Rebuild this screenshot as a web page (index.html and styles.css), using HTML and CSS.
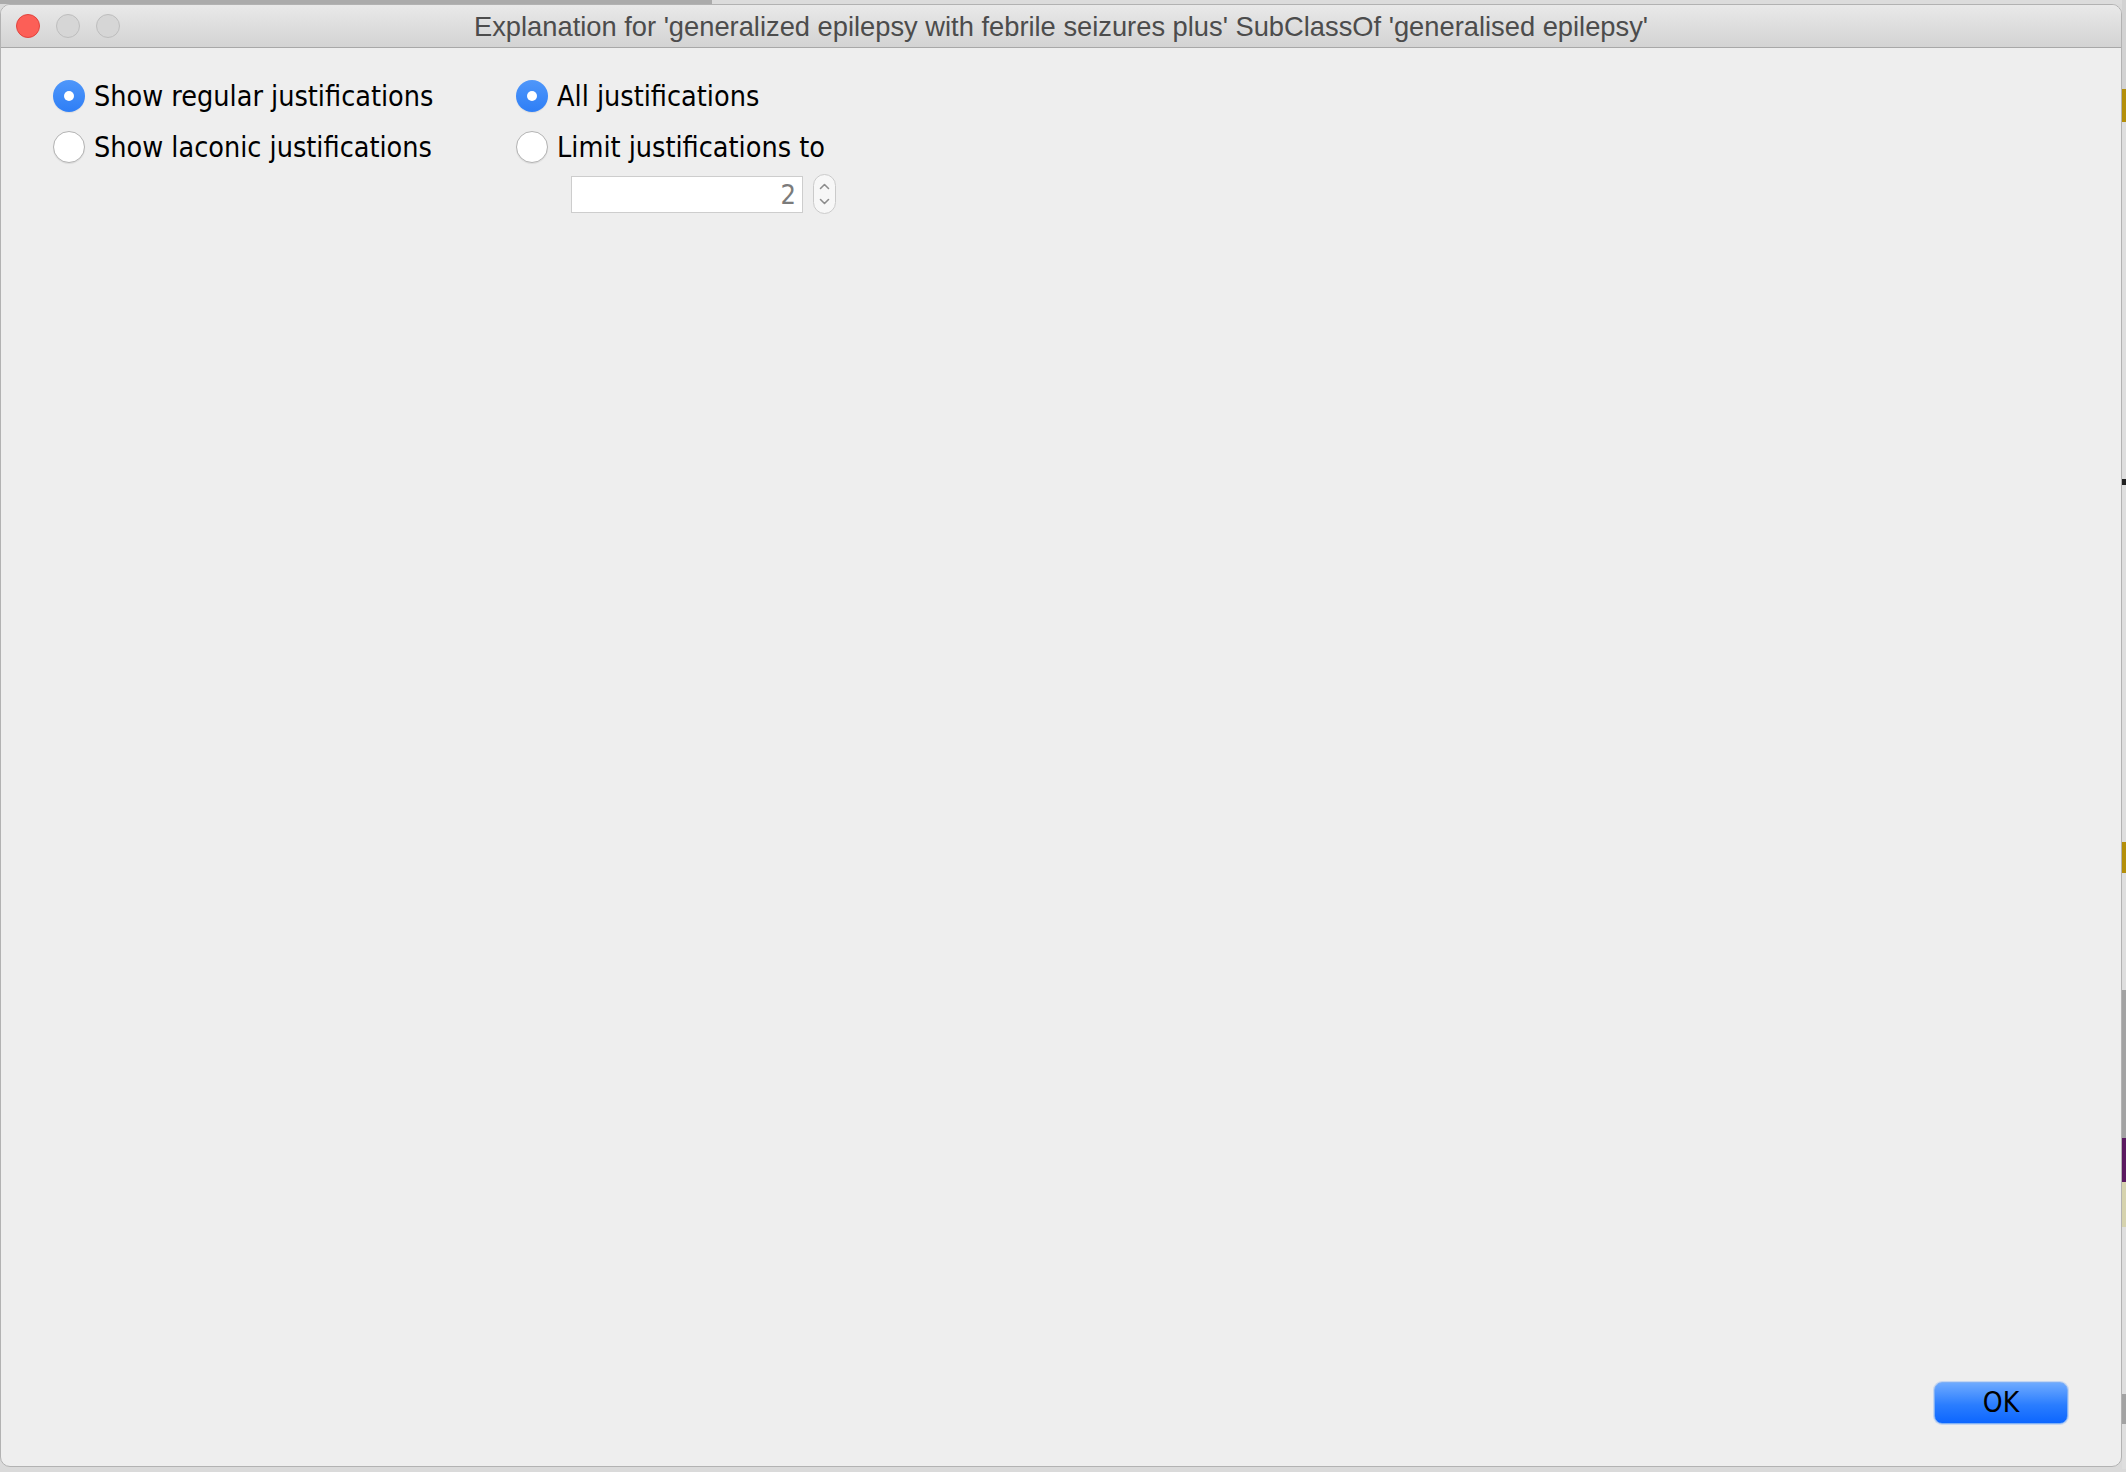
FILE: index.html
```html
<!DOCTYPE html>
<html lang="en">
<head>
<meta charset="utf-8">
<title>Explanation</title>
<link rel="stylesheet" href="styles.css">
</head>
<body>
<div class="desktop">
  <div class="window">
    <div class="titlebar">
      <div class="lights">
        <span class="light close"></span>
        <span class="light"></span>
        <span class="light"></span>
      </div>
      <div class="title">Explanation for 'generalized epilepsy with febrile seizures plus' SubClassOf 'generalised epilepsy'</div>
      <div class="spacer"></div>
    </div>
    <div class="content">
      <div class="options">
        <div class="col">
          <div class="radio"><span class="dot checked"></span><span class="label">Show regular justifications</span></div>
          <div class="radio"><span class="dot"></span><span class="label">Show laconic justifications</span></div>
        </div>
        <div class="col">
          <div class="radio"><span class="dot checked"></span><span class="label">All justifications</span></div>
          <div class="radio"><span class="dot"></span><span class="label">Limit justifications to</span></div>
          <div class="limit">
            <div class="field">2</div>
            <svg class="spinner" width="23" height="40" viewBox="0 0 23 40">
              <rect x="0.5" y="0.5" width="22" height="39" rx="11" ry="11" fill="#f7f7f7" stroke="#cacaca"/>
              <polyline points="7.5,14.5 11.5,10.5 15.5,14.5" fill="none" stroke="#8c8c8c" stroke-width="1.6" stroke-linecap="round" stroke-linejoin="round"/>
              <polyline points="7.5,25.5 11.5,29.5 15.5,25.5" fill="none" stroke="#8c8c8c" stroke-width="1.6" stroke-linecap="round" stroke-linejoin="round"/>
            </svg>
          </div>
        </div>
      </div>
      <div class="footer">
        <button class="ok" type="button">OK</button>
      </div>
    </div>
  </div>
  <div class="edge">
    <span class="band b-gray" style="height:89px"></span>
    <span class="band b-gold" style="height:33px"></span>
    <span class="band b-light" style="height:357px"></span>
    <span class="band b-dark" style="height:6px"></span>
    <span class="band b-light" style="height:357px"></span>
    <span class="band b-gold" style="height:31px"></span>
    <span class="band b-light" style="height:117px"></span>
    <span class="band b-mid" style="height:148px"></span>
    <span class="band b-purple" style="height:44px"></span>
    <span class="band b-beige" style="height:45px"></span>
    <span class="band b-light" style="height:167px"></span>
    <span class="band b-mid" style="height:30px"></span>
    <span class="band b-light" style="height:45px"></span>
  </div>
</div>
</body>
</html>
```
FILE: styles.css
```css
html, body {
  margin: 0;
  padding: 0;
}

body {
  width: 2126px;
  height: 1472px;
  overflow: hidden;
  background: #e0e0e0;
}

.desktop {
  display: flex;
  width: 2126px;
  height: 1472px;
  background:
    linear-gradient(to right, #ababab 0 712px, #dcdcdc 712px) top left / 100% 4px no-repeat,
    #dadada;
}

.window {
  box-sizing: border-box;
  width: 2122px;
  height: 1463px;
  margin-top: 4px;
  border: 1px solid #b2b2b2;
  border-radius: 10px;
  overflow: hidden;
  background: #eeeeee;
  display: flex;
  flex-direction: column;
}

.titlebar {
  box-sizing: border-box;
  height: 43px;
  flex: none;
  border-bottom: 1px solid #a8a8a8;
  background: linear-gradient(to bottom, #e9e9e9, #d3d3d3);
  display: grid;
  grid-template-columns: 1fr auto 1fr;
  align-items: center;
}

.lights {
  display: flex;
  gap: 16px;
  padding-left: 15px;
}

.light {
  box-sizing: border-box;
  width: 24px;
  height: 24px;
  border-radius: 50%;
  background: #d6d6d6;
  border: 1px solid #bdbdbd;
}

.light.close {
  background: #fc5f57;
  border-color: #e0443e;
}

.title {
  font-family: "Liberation Sans", Arial, sans-serif;
  font-size: 27.3px;
  color: #4c4c4c;
  white-space: nowrap;
  padding-top: 2px;
}

.content {
  flex: 1;
  display: flex;
  flex-direction: column;
  padding: 30px 53px 42px 52px;
}

.options {
  display: grid;
  grid-template-columns: 463px auto;
  align-items: start;
}

.col {
  display: flex;
  flex-direction: column;
  gap: 15px;
}

.radio {
  height: 36px;
  display: flex;
  align-items: center;
  gap: 9px;
  font-family: "DejaVu Sans Condensed", "DejaVu Sans", sans-serif;
  font-stretch: condensed;
  font-size: 28.5px;
  color: #000;
}

.label {
  white-space: nowrap;
}

.dot {
  box-sizing: border-box;
  flex: none;
  width: 32px;
  height: 32px;
  border-radius: 50%;
  background: #ffffff;
  border: 1px solid #b3b3b3;
  box-shadow: 0 1px 1px rgba(0, 0, 0, 0.08);
  display: flex;
  align-items: center;
  justify-content: center;
}

.dot.checked {
  border: none;
  background: linear-gradient(to bottom, #4f97fa, #2e7ef6);
}

.dot.checked::after {
  content: "";
  width: 10px;
  height: 10px;
  border-radius: 50%;
  background: #ffffff;
}

.limit {
  margin-top: -6px;
  margin-left: 55px;
  display: flex;
  align-items: center;
  gap: 10px;
}

.field {
  box-sizing: border-box;
  width: 232px;
  height: 37px;
  background: #ffffff;
  border: 1px solid #cdcdcd;
  padding-right: 6px;
  text-align: right;
  font-family: "DejaVu Sans Condensed", "DejaVu Sans", sans-serif;
  font-stretch: condensed;
  font-size: 27px;
  line-height: 35px;
  color: #7b7b7b;
}

.spinner {
  display: block;
  flex: none;
}

.footer {
  margin-top: auto;
  display: flex;
  justify-content: flex-end;
}

.ok {
  box-sizing: border-box;
  width: 134px;
  height: 42px;
  border-radius: 8px;
  border: 1px solid #7fb0f5;
  background: linear-gradient(to bottom, #6eaaff, #2a7dff 55%, #0c66ff);
  box-shadow: 0 0 0 1px rgba(120, 170, 245, 0.35);
  font-family: "DejaVu Sans Condensed", "DejaVu Sans", sans-serif;
  font-stretch: condensed;
  font-size: 28px;
  color: #000;
  padding: 0;
  line-height: 40px;
}

.edge {
  width: 4px;
  height: 1472px;
  display: flex;
  flex-direction: column;
}

.band {
  display: block;
  flex: none;
}

.b-gray { background: #d2d2d2; }
.b-gold { background: #b48f0a; }
.b-light { background: #dedede; }
.b-dark { background: #222222; }
.b-mid { background: #a2a2a2; }
.b-purple { background: #5b1a60; }
.b-beige { background: #d6d3ae; }
```
